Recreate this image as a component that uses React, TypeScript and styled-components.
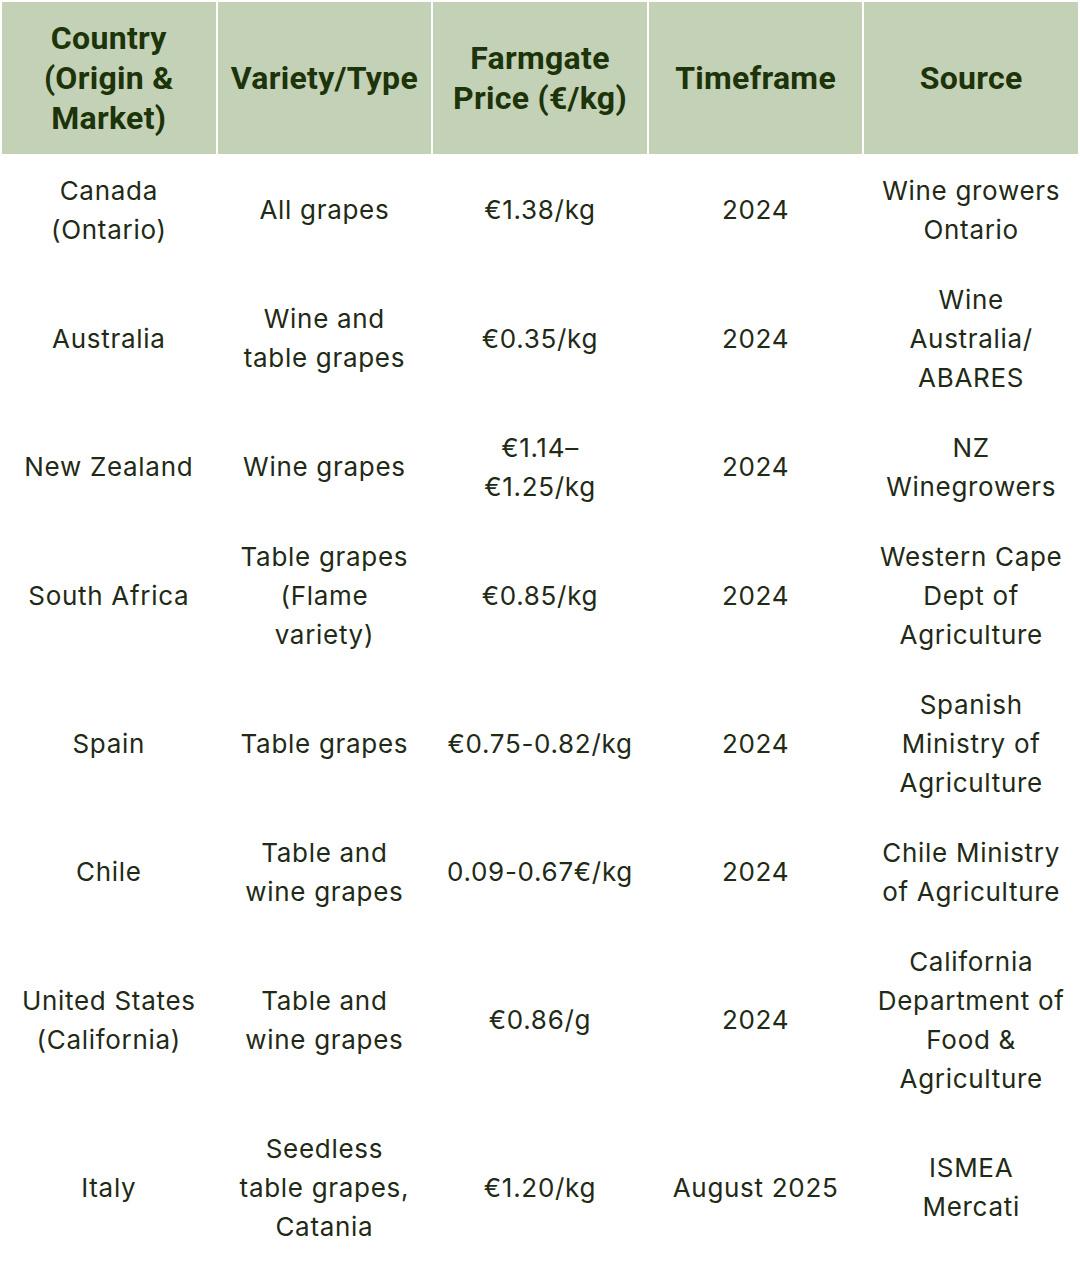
import React from "react";
import styled, { createGlobalStyle } from "styled-components";

const Global = createGlobalStyle`
  html, body { margin: 0; padding: 0; background: #ffffff; }
  body { font-family: Inter, "Noto Sans", sans-serif; }
`;

const Table = styled.table`
  width: 1080px;
  table-layout: fixed;
  border-collapse: collapse;
  border: 2px solid #ffffff;
`;

const HeadCell = styled.th`
  background: #c3d1b6;
  color: #1d3309;
  font-family: Roboto, "Liberation Sans", sans-serif;
  font-weight: 700;
  font-size: 32px;
  letter-spacing: 0.3px;
  line-height: 40px;
  padding: 16px 4px;
  text-align: center;
  vertical-align: middle;
  border: 2px solid #ffffff;
  height: 120px;
`;

const Cell = styled.td`
  color: #1f2a17;
  font-weight: 400;
  font-size: 26px;
  letter-spacing: 0.7px;
  line-height: 39px;
  padding: 14.5px 4px;
  text-align: center;
  vertical-align: middle;
  border: 2px solid #ffffff;
`;

type Row = [string, string, string, string, string];

const rows: Row[] = [
  ["Canada\n(Ontario)", "All grapes", "€1.38/kg", "2024", "Wine growers\nOntario"],
  ["Australia", "Wine and\ntable grapes", "€0.35/kg", "2024", "Wine\nAustralia/\nABARES"],
  ["New Zealand", "Wine grapes", "€1.14–\n€1.25/kg", "2024", "NZ\nWinegrowers"],
  ["South Africa", "Table grapes\n(Flame\nvariety)", "€0.85/kg", "2024", "Western Cape\nDept of\nAgriculture"],
  ["Spain", "Table grapes", "€0.75-0.82/kg", "2024", "Spanish\nMinistry of\nAgriculture"],
  ["Chile", "Table and\nwine grapes", "0.09-0.67€/kg", "2024", "Chile Ministry\nof Agriculture"],
  ["United States\n(California)", "Table and\nwine grapes", "€0.86/g", "2024", "California\nDepartment of\nFood &\nAgriculture"],
  ["Italy", "Seedless\ntable grapes,\nCatania", "€1.20/kg", "August 2025", "ISMEA\nMercati"],
];

const headers = ["Country\n(Origin &\nMarket)", "Variety/Type", "Farmgate\nPrice (€/kg)", "Timeframe", "Source"];

const Lines: React.FC<{ text: string }> = ({ text }) => (
  <>
    {text.split("\n").map((l, i, arr) => (
      <React.Fragment key={i}>
        {l}
        {i < arr.length - 1 && <br />}
      </React.Fragment>
    ))}
  </>
);

export default function App() {
  return (
    <>
      <Global />
      <Table>
        <thead>
          <tr>
            {headers.map((h) => (
              <HeadCell key={h}>
                <Lines text={h} />
              </HeadCell>
            ))}
          </tr>
        </thead>
        <tbody>
          {rows.map((r, i) => (
            <tr key={i}>
              {r.map((c, j) => (
                <Cell key={j}>
                  <Lines text={c} />
                </Cell>
              ))}
            </tr>
          ))}
        </tbody>
      </Table>
    </>
  );
}
